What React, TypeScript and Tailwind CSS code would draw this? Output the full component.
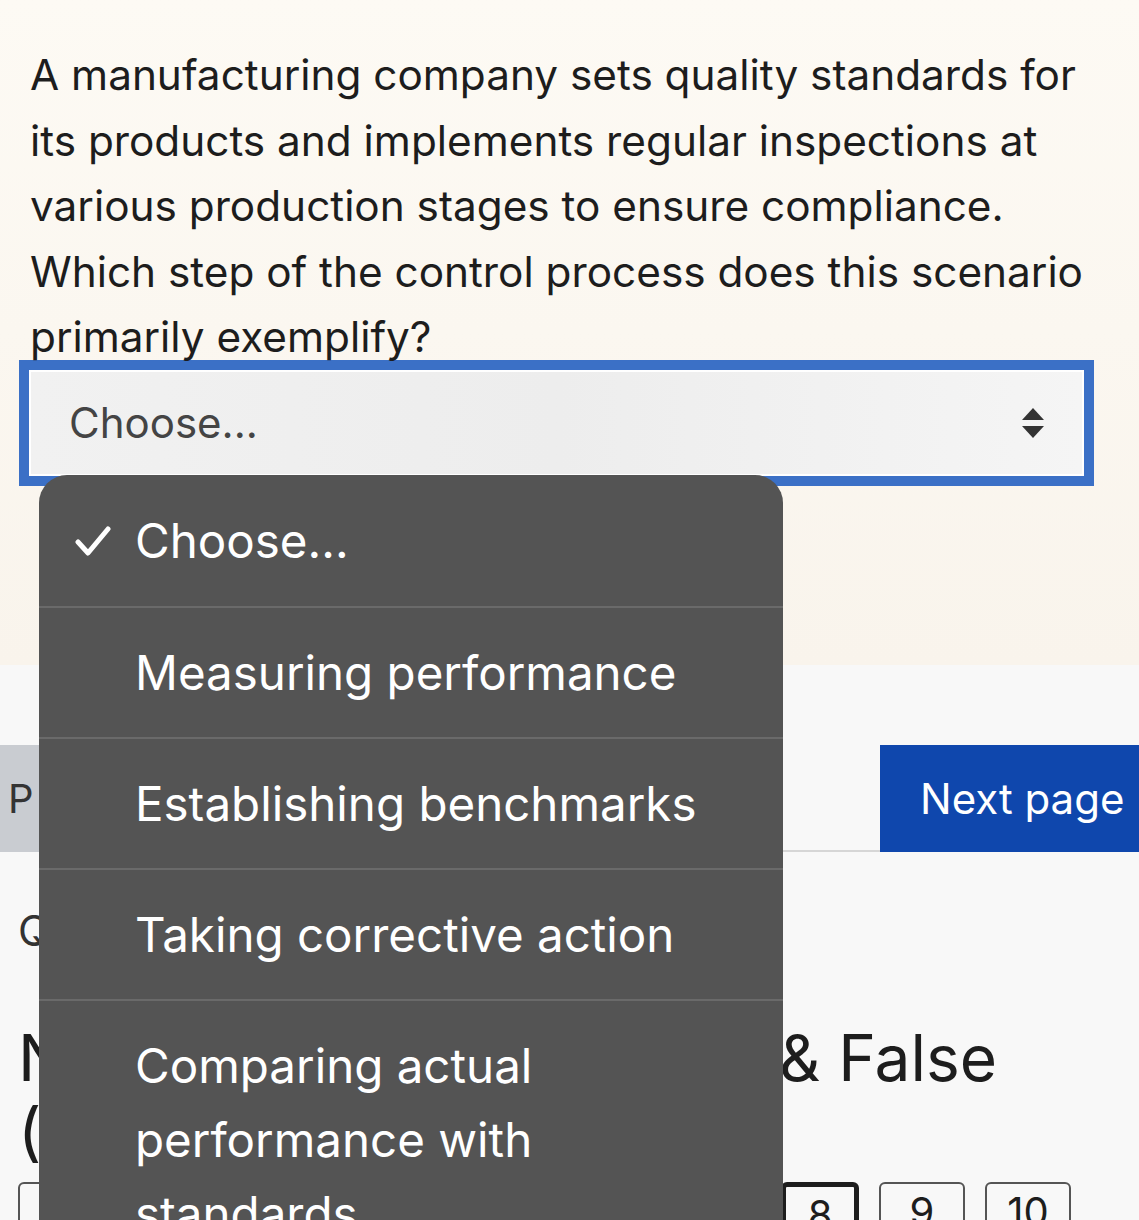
import React from "react";

const options = [
  "Choose...",
  "Measuring performance",
  "Establishing benchmarks",
  "Taking corrective action",
  "Comparing actual performance with standards",
];

const question = [
  "A manufacturing company sets quality standards for",
  "its products and implements regular inspections at",
  "various production stages to ensure compliance.",
  "Which step of the control process does this scenario",
  "primarily exemplify?",
];

function UpDown() {
  return (
    <svg width="26" height="34" viewBox="0 0 26 34" fill="#333">
      <path d="M13 2 L24 14 L2 14 Z" />
      <path d="M2 20 L24 20 L13 32 Z" />
    </svg>
  );
}

export default function App() {
  return (
    <div
      className="relative h-[1220px] w-[1139px] overflow-hidden bg-[#f8f8f8] text-[#1d1d1d]"
      style={{ fontFamily: "Inter, 'Noto Sans', sans-serif" }}
    >
      {/* question formulation */}
      <div className="h-[665px] bg-gradient-to-b from-[#fdfaf4] to-[#f9f4ec] px-[30px] pt-[42px]">
        <p className="whitespace-nowrap text-[42.3px] leading-[65.5px]">
          {question.map((l) => (
            <span key={l} className="block">
              {l}
            </span>
          ))}
        </p>
        <div className="-mx-[11px] mt-[-10px] h-[126px] w-[1075px] border-[10px] border-[#3b70c6] bg-[#3b70c6]">
          <div className="flex h-full items-center justify-between border-2 border-white bg-gradient-to-r from-[#f1f1f1] via-[#ededed] to-[#f5f5f5] pl-[38px] pr-[36px]">
            <span className="text-[42px] text-[#444]">Choose...</span>
            <UpDown />
          </div>
        </div>
      </div>

      {/* navigation */}
      <div className="mt-[80px] flex h-[107px] items-stretch">
        <div className="flex w-[40px] items-center bg-[#c9ccd1] pl-[8px] text-[40px] text-[#333]">P</div>
        <div className="flex-1 border-b-2 border-[#d6d6d6]" />
        <div className="flex w-[259px] items-center bg-[#0f47ad] pl-[40px] text-[42px] text-white">Next page</div>
      </div>

      <div className="pl-[18px] pt-[58px] text-[42px] leading-none text-[#333]">Q</div>

      <div className="mt-[68px] flex items-baseline justify-between pl-[18px] pr-[142px] text-[64px] leading-[76px]">
        <span>N</span>
        <span>&amp; False</span>
      </div>
      <div className="pl-[18px] text-[64px] leading-[70px]">(</div>

      <div className="mt-[16px] flex h-[60px] items-start">
        <div className="ml-[18px] h-[60px] w-[60px] rounded-[6px] border-2 border-[#555]" />
        <div className="ml-auto flex gap-[20px] pr-[68px]">
          {["8", "9", "10"].map((n, i) => (
            <div
              key={n}
              className={`flex h-[60px] items-start justify-center rounded-[6px] pt-[8px] text-[40px] leading-none ${
                i === 0 ? "w-[78px] border-[5px] border-[#1d1d1d]" : "w-[86px] border-2 border-[#555]"
              }`}
            >
              {n}
            </div>
          ))}
        </div>
      </div>

      {/* native select popup */}
      <div className="absolute left-[39px] top-[475px] w-[744px] rounded-t-[28px] bg-[#545454] text-white">
        {options.map((o, i) => (
          <div
            key={o}
            className={`flex pl-[36px] pr-[40px] ${i > 0 ? "border-t-2 border-[#6a6a6a]" : ""} ${
              i === 4 ? "items-start pt-[28px] pb-[40px]" : "h-[131px] items-center"
            }`}
          >
            <span className="flex w-[60px] shrink-0 items-center">
              {i === 0 ? (
                <svg width="36" height="32" viewBox="0 0 36 32" fill="none" stroke="white" strokeWidth="5" strokeLinecap="round" strokeLinejoin="round">
                  <path d="M3 17 L13 28 L33 4" />
                </svg>
              ) : null}
            </span>
            <span
              className={`text-[47.5px] leading-[74px] ${i === 4 ? "w-[560px]" : "whitespace-nowrap"}`}
            >
              {o}
            </span>
          </div>
        ))}
      </div>
    </div>
  );
}
